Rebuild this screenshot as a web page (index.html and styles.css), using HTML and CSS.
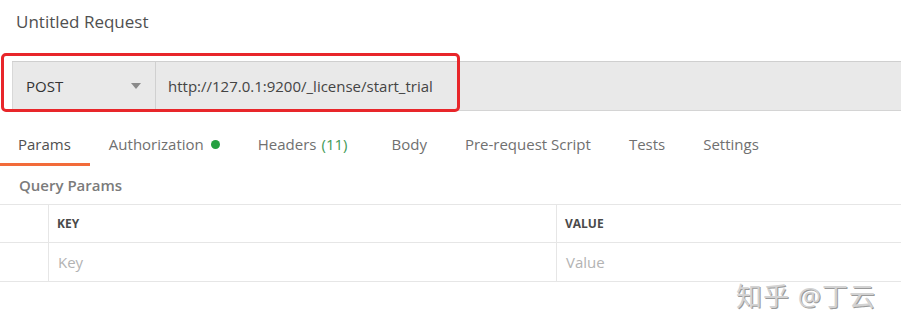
FILE: index.html
```html
<!DOCTYPE html>
<html lang="en">
<head>
    <meta charset="UTF-8">
    <title>Untitled Request</title>
    <link rel="stylesheet" href="styles.css">
</head>
<body>

    <div class="title">Untitled Request</div>

    <div class="url-bar">
        <div class="method">
            <span>POST</span>
            <span class="caret"></span>
        </div>
        <div class="url">http://127.0.1:9200/_license/start_trial</div>
        <div class="highlight"></div>
    </div>

    <div class="tabs">
        <div class="tab active">Params</div>
        <div class="tab">Authorization <span class="dot"></span></div>
        <div class="tab tab-headers">Headers <span class="count">(11)</span></div>
        <div class="tab">Body</div>
        <div class="tab">Pre-request Script</div>
        <div class="tab">Tests</div>
        <div class="tab">Settings</div>
    </div>

    <div class="section-title">Query Params</div>

    <table class="params">
        <tr>
            <th class="check"></th>
            <th class="key">KEY</th>
            <th>VALUE</th>
        </tr>
        <tr>
            <td class="check"></td>
            <td class="placeholder">Key</td>
            <td class="placeholder">Value</td>
        </tr>
    </table>

    <div class="watermark">知乎 @丁云</div>

</body>
</html>
```

FILE: styles.css
```css
body {
    font-family: 'Open Sans', 'Noto Sans CJK SC', sans-serif;
    background: #ffffff;
    color: #505050;
    margin: 0;
    padding: 0;
    position: relative;
    width: 901px;
    height: 332px;
    overflow: hidden;
}

.title {
    padding: 10px 0 0 16px;
    height: 28px;
    font-size: 17px;
    line-height: 24px;
    color: #505050;
}

.url-bar {
    position: relative;
    display: flex;
    margin: 23px 0 0 12px;
    height: 48px;
    background: #e9e9e9;
    border-top: 1px solid #cfcfcf;
    border-bottom: 1px solid #d4d4d4;
}

.method {
    display: flex;
    align-items: center;
    justify-content: space-between;
    width: 144px;
    padding: 0 13px;
    box-sizing: border-box;
    border-left: 1px solid #d8d8d8;
    border-right: 1px solid #d0d0d0;
    font-size: 15px;
    color: #333;
}

.caret {
    width: 0;
    height: 0;
    border-left: 5px solid transparent;
    border-right: 5px solid transparent;
    border-top: 6px solid #8a8a8a;
    margin-right: 1px;
}

.url {
    display: flex;
    align-items: center;
    padding-left: 12px;
    font-size: 15px;
    color: #444;
}

.highlight {
    position: absolute;
    left: -11px;
    top: -9px;
    width: 453px;
    height: 53px;
    border: 3px solid #e8262a;
    border-radius: 5px;
}

.tabs {
    display: flex;
    margin-top: 20px;
    height: 35px;
}

.tab {
    padding: 0 19px;
    font-size: 15px;
    line-height: 26px;
    color: #707070;
    border-bottom: 3px solid transparent;
    display: flex;
    align-items: flex-start;
    gap: 7px;
}

.tab.active {
    color: #505050;
    padding: 0 19px 0 18px;
    border-bottom-color: #f26b3a;
}

.tab-headers {
    padding-right: 25px;
}

.tab-tight {
    padding-right: 18px;
}

.dot {
    width: 9px;
    height: 9px;
    border-radius: 50%;
    background: #26a042;
    margin-top: 9px;
}

.count {
    color: #3f9a57;
    margin-left: -2px;
}

.section-title {
    padding: 9px 0 0 19px;
    height: 29px;
    font-size: 15px;
    font-weight: 600;
    color: #7b7b7b;
    line-height: 20px;
}

.params {
    width: 100%;
    border-collapse: collapse;
}

.params th,
.params td {
    border-top: 1px solid #e6e6e6;
    border-bottom: 1px solid #e6e6e6;
    border-left: 1px solid #e6e6e6;
    text-align: left;
    padding: 0 8px;
}

.params th {
    height: 37px;
    font-size: 12px;
    font-weight: 700;
    color: #4a4a4a;
}

.params td {
    height: 38px;
    font-size: 15px;
}

.params .check {
    width: 32px;
    border-left: none;
}

.params .key {
    width: 491px;
}

.placeholder {
    color: #b3b3b3;
}

.params td.placeholder {
    padding-left: 9px;
}

.watermark {
    position: absolute;
    left: 736px;
    top: 276px;
    font-size: 26px;
    color: #d3d3d3;
    text-shadow: 1px 1px 0 #9a9a9a;
    letter-spacing: 1px;
}
```
